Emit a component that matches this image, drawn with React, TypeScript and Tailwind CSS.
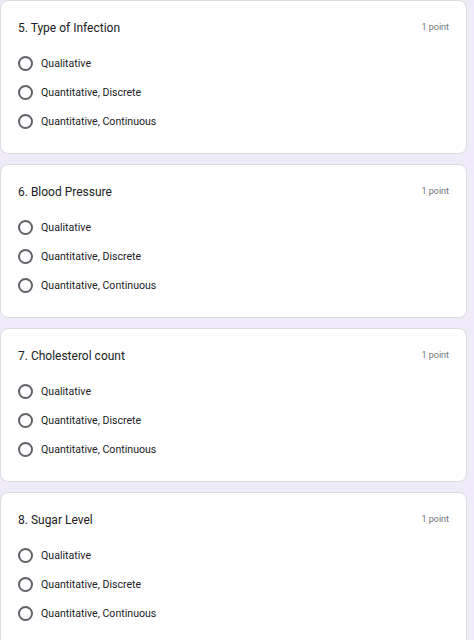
const questions = [
  "5. Type of Infection",
  "6. Blood Pressure",
  "7. Cholesterol count",
  "8. Sugar Level",
];

const options = ["Qualitative", "Quantitative, Discrete", "Quantitative, Continuous"];

function Question({ title }: { title: string }) {
  return (
    <div className="h-[154px] shrink-0 rounded-lg border border-[#dadce0] bg-white px-[17px] pt-[17px]">
      <div className="flex h-5 items-center justify-between">
        <span className="text-[12px] text-[#202124]">{title}</span>
        <span className="text-[9px] text-[#70757a]">1 point</span>
      </div>
      <div className="mt-[11px]">
        {options.map((opt) => (
          <div key={opt} className="flex h-[29px] items-center gap-2">
            <span className="h-[15px] w-[15px] rounded-full border-2 border-[#5f6368]" />
            <span className="text-[10.6px] text-[#202124]">{opt}</span>
          </div>
        ))}
      </div>
    </div>
  );
}

export default function App() {
  return (
    <div
      className="flex h-[640px] flex-col gap-[10px] overflow-hidden bg-[#f0ebf8] pr-[7px]"
      style={{ fontFamily: "Roboto, 'Liberation Sans', sans-serif" }}
    >
      {questions.map((q) => (
        <Question key={q} title={q} />
      ))}
    </div>
  );
}
